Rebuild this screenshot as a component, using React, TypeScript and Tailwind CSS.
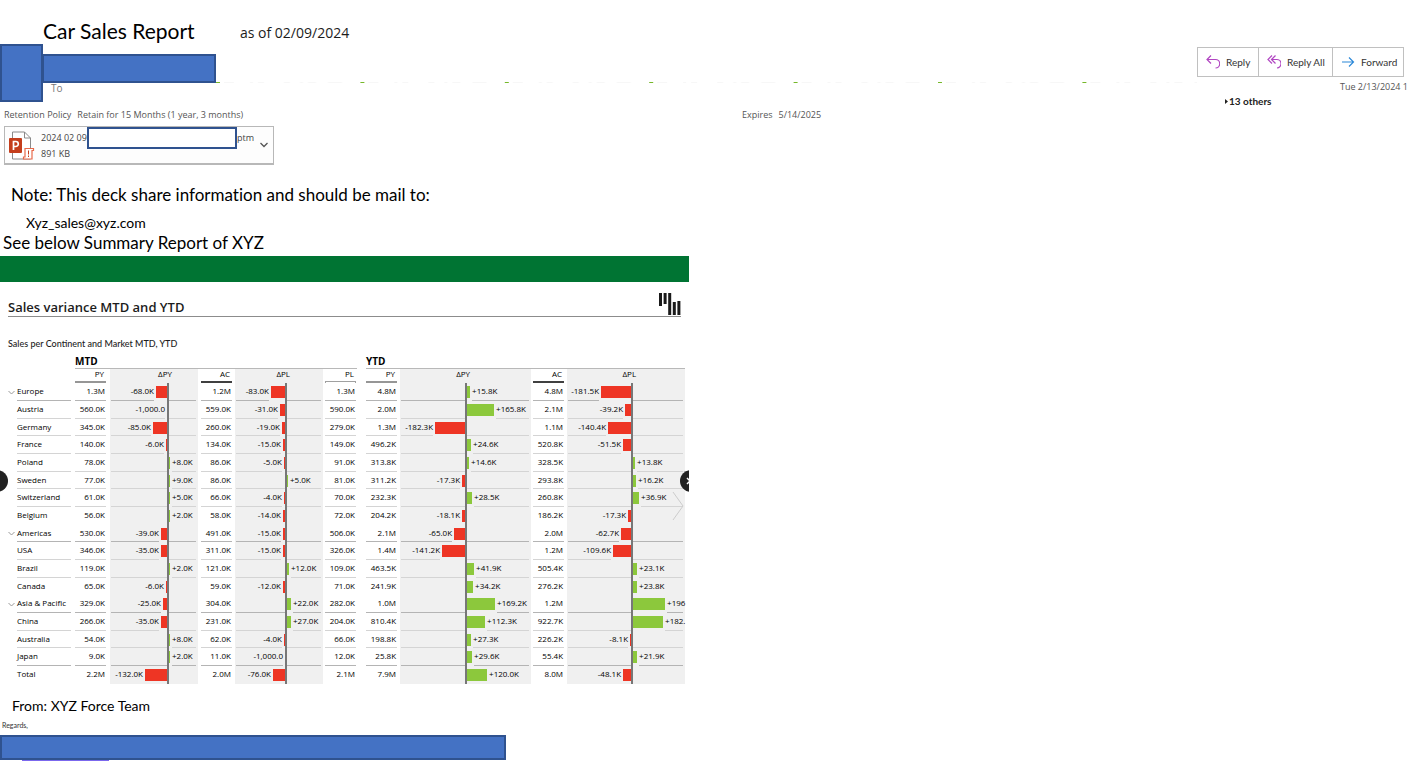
import React from "react";

type Delta = string | null;

interface Row {
  name: string;
  group?: boolean;
  line: "none" | "light" | "dark";
  values: [string, Delta, string, Delta, string, string, Delta, string, Delta];
}

const rows: Row[] = [
  { name: "Europe", group: true, line: "dark", values: ["1.3M", "-68.0K", "1.2M", "-83.0K", "1.3M", "4.8M", "+15.8K", "4.8M", "-181.5K"] },
  { name: "Austria", line: "light", values: ["560.0K", "-1,000.0", "559.0K", "-31.0K", "590.0K", "2.0M", "+165.8K", "2.1M", "-39.2K"] },
  { name: "Germany", line: "light", values: ["345.0K", "-85.0K", "260.0K", "-19.0K", "279.0K", "1.3M", "-182.3K", "1.1M", "-140.4K"] },
  { name: "France", line: "light", values: ["140.0K", "-6.0K", "134.0K", "-15.0K", "149.0K", "496.2K", "+24.6K", "520.8K", "-51.5K"] },
  { name: "Poland", line: "light", values: ["78.0K", "+8.0K", "86.0K", "-5.0K", "91.0K", "313.8K", "+14.6K", "328.5K", "+13.8K"] },
  { name: "Sweden", line: "light", values: ["77.0K", "+9.0K", "86.0K", "+5.0K", "81.0K", "311.2K", "-17.3K", "293.8K", "+16.2K"] },
  { name: "Switzerland", line: "light", values: ["61.0K", "+5.0K", "66.0K", "-4.0K", "70.0K", "232.3K", "+28.5K", "260.8K", "+36.9K"] },
  { name: "Belgium", line: "none", values: ["56.0K", "+2.0K", "58.0K", "-14.0K", "72.0K", "204.2K", "-18.1K", "186.2K", "-17.3K"] },
  { name: "Americas", group: true, line: "dark", values: ["530.0K", "-39.0K", "491.0K", "-15.0K", "506.0K", "2.1M", "-65.0K", "2.0M", "-62.7K"] },
  { name: "USA", line: "light", values: ["346.0K", "-35.0K", "311.0K", "-15.0K", "326.0K", "1.4M", "-141.2K", "1.2M", "-109.6K"] },
  { name: "Brazil", line: "light", values: ["119.0K", "+2.0K", "121.0K", "+12.0K", "109.0K", "463.5K", "+41.9K", "505.4K", "+23.1K"] },
  { name: "Canada", line: "none", values: ["65.0K", "-6.0K", "59.0K", "-12.0K", "71.0K", "241.9K", "+34.2K", "276.2K", "+23.8K"] },
  { name: "Asia & Pacific", group: true, line: "dark", values: ["329.0K", "-25.0K", "304.0K", "+22.0K", "282.0K", "1.0M", "+169.2K", "1.2M", "+196"] },
  { name: "China", line: "light", values: ["266.0K", "-35.0K", "231.0K", "+27.0K", "204.0K", "810.4K", "+112.3K", "922.7K", "+182."] },
  { name: "Australia", line: "light", values: ["54.0K", "+8.0K", "62.0K", "-4.0K", "66.0K", "198.8K", "+27.3K", "226.2K", "-8.1K"] },
  { name: "Japan", line: "dark", values: ["9.0K", "+2.0K", "11.0K", "-1,000.0", "12.0K", "25.8K", "+29.6K", "55.4K", "+21.9K"] },
  { name: "Total", line: "none", values: ["2.2M", "-132.0K", "2.0M", "-76.0K", "2.1M", "7.9M", "+120.0K", "8.0M", "-48.1K"] },
];

interface Column {
  kind: "value" | "delta";
  label: string;
  width: string;
  inner: string;
  before: string;
  rule: string;
}

const columns: Column[] = [
  { kind: "value", label: "PY", width: "w-[35px]", inner: "w-[31px]", before: "", rule: "bg-[#969696]" },
  { kind: "delta", label: "ΔPY", width: "w-[91px]", inner: "w-[88px]", before: "w-[57px]", rule: "" },
  { kind: "value", label: "AC", width: "w-[34px]", inner: "w-[31px]", before: "", rule: "bg-[#404040]" },
  { kind: "delta", label: "ΔPL", width: "w-[90px]", inner: "w-[88px]", before: "w-[50px]", rule: "" },
  { kind: "value", label: "PL", width: "w-[41px]", inner: "w-[31px]", before: "", rule: "border border-b-0 border-[#a0a0a0]" },
  { kind: "value", label: "PY", width: "w-[34px]", inner: "w-[31px]", before: "", rule: "bg-[#969696]" },
  { kind: "delta", label: "ΔPY", width: "w-[133px]", inner: "w-[131px]", before: "w-[65px]", rule: "" },
  { kind: "value", label: "AC", width: "w-[34px]", inner: "w-[31px]", before: "", rule: "bg-[#404040]" },
  { kind: "delta", label: "ΔPL", width: "w-[118px]", inner: "w-[118px]", before: "w-[64px]", rule: "" },
];

const lineColor = {
  none: "border-transparent",
  light: "border-[#d4d4d4]",
  dark: "border-[#b4b4b4]",
};

const PX_PER_K = 0.163;

function barWidth(text: string) {
  if (text.includes(",")) return 0;
  return Math.max(1, Math.round(Math.abs(parseFloat(text)) * PX_PER_K));
}

function DeltaCell({ text, col, line, height }: { text: string; col: Column; line: string; height: string }) {
  const negative = text.startsWith("-");
  const bar = (
    <div
      className={negative ? "h-3 bg-[#ee3524]" : "h-3 bg-[#8cc83c]"}
      style={{ width: barWidth(text) }}
    />
  );
  return (
    <div className={`flex bg-[#f0f0f0] ${col.inner} ${height}`}>
      <div className={`flex shrink-0 pl-px ${col.before}`}>
        <div className={`flex flex-1 items-center justify-end whitespace-nowrap border-b pb-px ${line}`}>
          {negative && text}
        </div>
        {negative && <div className="flex items-center pl-[2px]">{bar}</div>}
      </div>
      <div className="w-[2px] shrink-0 bg-[#777777]" />
      <div className="flex min-w-0 flex-1 pr-[2px]">
        {!negative && <div className="flex items-center pr-[2px]">{bar}</div>}
        <div className={`flex min-w-0 flex-1 items-center whitespace-nowrap border-b pb-px ${line}`}>
          {!negative && text}
        </div>
      </div>
    </div>
  );
}

function VarianceTable() {
  return (
    <table className="ml-2 w-[677px] table-fixed border-collapse text-[8px] font-medium leading-[10px] text-black">
      <colgroup>
        <col className="w-[67px]" />
        {columns.map((c, i) => (
          <col key={i} className={c.width} />
        ))}
      </colgroup>
      <thead>
        <tr className="text-left align-bottom text-[10px] leading-[14px]">
          <td className="p-0" />
          <th colSpan={5} scope="colgroup" className="p-0 pr-[9px]">
            <div className="border-b border-[#b8b8b8]">MTD</div>
          </th>
          <th colSpan={4} scope="colgroup" className="p-0">
            <div className="border-b border-[#b8b8b8]">YTD</div>
          </th>
        </tr>
        <tr>
          <td className="p-0" />
          {columns.map((c, i) => (
            <th key={i} scope="col" className="p-0 text-left font-medium">
              {c.kind === "value" ? (
                <div className={`flex h-[14px] flex-col justify-between text-right ${c.inner}`}>
                  <span className="pr-[2px]">{c.label}</span>
                  <span className={`block h-[2px] ${c.rule}`} />
                </div>
              ) : (
                <div className={`flex h-[14px] bg-[#f0f0f0] ${c.inner}`}>
                  <span className={`flex justify-end ${c.before}`}>
                    <span className="-mr-[5px]">{c.label}</span>
                  </span>
                </div>
              )}
            </th>
          ))}
        </tr>
      </thead>
      <tbody>
        {rows.map((r, i) => {
          const height = i % 3 === 2 ? "h-[17px]" : "h-[18px]";
          const line = lineColor[r.line];
          return (
            <tr key={r.name}>
              <th scope="row" className="p-0 font-medium">
                <div className={`flex ${height}`}>
                  <span className="flex w-[9px] items-center">
                    {r.group && (
                      <svg className="h-[5px] w-[7px]" viewBox="0 0 7 5" fill="none" stroke="#9a9a9a">
                        <path d="M.5 1 3.5 4 6.5 1" />
                      </svg>
                    )}
                  </span>
                  <span className={`mr-1 flex flex-1 items-center whitespace-nowrap border-b pb-px ${line}`}>{r.name}</span>
                </div>
              </th>
              {columns.map((c, j) => {
                const text = r.values[j] ?? "";
                return (
                  <td key={j} className="p-0">
                    {c.kind === "delta" ? (
                      <DeltaCell text={text} col={c} line={line} height={height} />
                    ) : (
                      <div className={`flex items-center justify-end border-b pb-px pr-px ${c.inner} ${height} ${line}`}>
                        {text}
                      </div>
                    )}
                  </td>
                );
              })}
            </tr>
          );
        })}
      </tbody>
    </table>
  );
}

function Traces() {
  return (
    <svg className="h-[2px] min-w-0 flex-1" aria-hidden="true">
      <defs>
        <pattern id="traces" width="144.4" height="2" patternUnits="userSpaceOnUse">
          <rect x="0" y="1" width="4" height="1" fill="#76b82a" />
          <path d="M8 1.500h10M34 1.500h3M42 1.500h6M68 1.500h6M84 1.500h3M92 1.500h8M112 1.500h14" stroke="#f7f7f7" />
        </pattern>
      </defs>
      <rect width="1010" height="2" fill="url(#traces)" />
    </svg>
  );
}

function Actions() {
  const base = "flex h-[28px] items-center gap-[6px] whitespace-nowrap pl-2 font-['Lato',sans-serif] text-[10px] text-[#333333]";
  return (
    <div className="flex border border-[#c0c0c0]">
      <button type="button" className={`${base} w-[60px]`}>
        <svg className="h-[14px] w-[14px] shrink-0" viewBox="0 0 14 14" fill="none" stroke="#b146c2" strokeWidth="1.2">
          <path d="M5 .500 1 4.500l4 4M1 4.500h8.500a4 4 0 0 1 0 8.500" />
        </svg>
        Reply
      </button>
      <button type="button" className={`${base} w-[74px] border-l border-[#c0c0c0]`}>
        <svg className="h-[14px] w-[14px] shrink-0" viewBox="0 0 14 14" fill="none" stroke="#b146c2" strokeWidth="1.2">
          <path d="M5 .500 1 4.500l4 4M8.500 .500l-4 4 4 4M4.500 4.500H9.500a4 4 0 0 1 .500 8.500" />
        </svg>
        Reply All
      </button>
      <button type="button" className={`${base} w-[71px] border-l border-[#c0c0c0]`}>
        <svg className="h-[14px] w-[14px] shrink-0" viewBox="0 0 14 14" fill="none" stroke="#2b88d8" strokeWidth="1.2">
          <path d="M1 7h11.500M8 2.500 12.500 7 8 11.500" />
        </svg>
        Forward
      </button>
    </div>
  );
}

function Attachment() {
  return (
    <div className="ml-1 flex h-[39px] w-[270px] border border-b-2 border-[#b8b8b8] bg-[#fdfdfd] text-[9px] leading-[14px] text-[#444444]">
      <svg className="ml-1 mt-1 h-[30px] w-[26px] shrink-0" viewBox="0 0 26 30">
        <path d="M3.500 1h12l6 6v21h-18z" fill="#fff" stroke="#8a8a8a" />
        <path d="M15.500 1v6h6" fill="none" stroke="#8a8a8a" />
        <rect x="0" y="7" width="13" height="15" rx="1" fill="#c43e1c" />
        <path d="M4.500 19v-8.500h2.300a2.500 2.500 0 0 1 0 5H4.500" fill="none" stroke="#fff" strokeWidth="1.700" />
        <path d="M16 17.500h8.500v2H23v8.500h-8.500v-2H16z" fill="#fff" stroke="#e8694a" strokeWidth="1.200" />
        <path d="M19.500 19.500v4M19.500 24.500v1.500" stroke="#c43e1c" />
      </svg>
      <div className="ml-[6px] w-[213px] shrink-0">
        <div className="flex h-[22px] items-center whitespace-nowrap">
          <span className="w-[46px] shrink-0">2024 02 09</span>
          <span className="h-[22px] w-[150px] shrink-0 border-2 border-[#2f528f] bg-white" />
          <span>ptm</span>
        </div>
        <div className="-mt-[2px]">891 KB</div>
      </div>
      <button type="button" aria-label="Attachment options" className="ml-[6px]">
        <svg className="h-[6px] w-[8px]" viewBox="0 0 8 6" fill="none" stroke="#555555" strokeWidth="1.300">
          <path d="M.5 1 4 4.500 7.500 1" />
        </svg>
      </button>
    </div>
  );
}

function Report() {
  return (
    <section className="relative w-[689px] overflow-hidden">
      <div className="h-[26px] bg-[#007433]" />
      <div className="ml-2 mr-2 flex h-[35px] items-end justify-between border-b border-[#8c8c8c]">
        <h2 className="text-[13px] font-semibold leading-[17px] text-[#1c1c1c]">Sales variance MTD and YTD</h2>
        <svg className="mb-px h-[22px] w-[22px]" viewBox="0 0 22 22" fill="#1a1a1a">
          <rect x="0" y="0" width="3" height="13" />
          <rect x="4.600" y="0" width="3" height="11" />
          <rect x="9.200" y="0" width="3" height="22" />
          <rect x="13.800" y="9" width="3" height="13" />
          <rect x="18.400" y="8" width="3" height="14" />
        </svg>
      </div>
      <p className="ml-2 mt-5 h-[17px] font-['Lato',sans-serif] text-[9px] font-medium leading-[14px] text-[#1c1c1c]">Sales per Continent and Market MTD, YTD</p>
      <VarianceTable />
      <button type="button" aria-label="Previous slide" className="absolute -left-[14px] top-[214px] size-[22px] rounded-full bg-[#222222]" />
      <svg className="absolute left-[672px] top-[235px] h-[30px] w-[12px]" viewBox="0 0 12 30" fill="none" stroke="#cccccc">
        <path d="M1 1l10 14L1 29" />
      </svg>
      <button type="button" aria-label="Next slide" className="absolute left-[680px] top-[214px] size-[22px] rounded-full bg-[#222222]">
        <svg className="h-[22px] w-[22px]" viewBox="0 0 22 22" fill="none" stroke="#ffffff" strokeWidth="1.500">
          <path d="M7 8l3 3-3 3" />
        </svg>
      </button>
    </section>
  );
}

export default function App() {
  return (
    <main className="overflow-hidden bg-white font-['Open_Sans',sans-serif] text-black">
      <header className="flex h-11 items-center pl-[43px] pt-[18px]">
        <h1 className="w-[197px] font-['Lato',sans-serif] text-[21px] leading-6">Car Sales Report</h1>
        <p className="pt-1 text-[14px] leading-6 text-[#1c1c1c]">as of 02/09/2024</p>
      </header>

      <div className="flex h-[62px]">
        <div className="h-[58px] w-[43px] shrink-0 border-2 border-[#2f528f] bg-[#4472c4]" />
        <div className="min-w-0 flex-1 pt-[10px]">
          <div className="flex items-end">
            <div className="-ml-px h-[29px] w-[174px] shrink-0 border-2 border-[#2f528f] bg-[#4472c4]" />
            <Traces />
          </div>
          <div className="pl-2 text-[10px] leading-[10px] text-[#777777]">To</div>
        </div>
        <div className="w-[210px] shrink-0 pt-[3px]">
          <div className="pr-[3px]">
            <Actions />
          </div>
          <div className="ml-auto mt-[3px] w-[67px] whitespace-nowrap text-[9px] leading-[14px] text-[#555555]">
            Tue 2/13/2024 1
          </div>
          <div className="flex items-center gap-px pl-[28px] font-['Lato',sans-serif] text-[10px] font-bold leading-[14px] text-[#222222]">
            <svg className="h-[5px] w-[3px]" viewBox="0 0 3 5">
              <path d="M0 0l3 2.500L0 5z" fill="#222222" />
            </svg>
            13 others
          </div>
        </div>
      </div>

      <div className="flex h-5 pl-1 text-[9px] leading-[18px] text-[#555555]">
        <div className="flex w-[738px] gap-[6px]">
          <span>Retention Policy</span>
          <span>Retain for 15 Months (1 year, 3 months)</span>
        </div>
        <div className="flex gap-[6px]">
          <span>Expires</span>
          <span>5/14/2025</span>
        </div>
      </div>

      <Attachment />

      <div className="pt-5 font-['Lato',sans-serif] [font-variant-ligatures:none]">
        <p className="pl-[11px] text-[17px] leading-5">Note: This deck share information and should be mail to:</p>
        <p className="mt-2 pl-[26px] text-[14px] leading-5">
          <a href="mailto:Xyz_sales@xyz.com">Xyz_sales@xyz.com</a>
        </p>
        <p className="h-[23px] pl-[3px] text-[17px] leading-5">See below Summary Report of XYZ</p>
      </div>

      <Report />

      <footer className="font-['Lato',sans-serif]">
        <p className="mt-3 pl-3 text-[14px] leading-5">From: XYZ Force Team</p>
        <p className="h-[19px] pl-[2px] text-[7px] leading-[18px] text-[#333333]">Regards,</p>
        <div className="h-[25px] w-[506px] border-2 border-[#2f528f] bg-[#4472c4]" />
        <div className="ml-[22px] h-px w-[87px] bg-[#7b68ee]" />
      </footer>
    </main>
  );
}
